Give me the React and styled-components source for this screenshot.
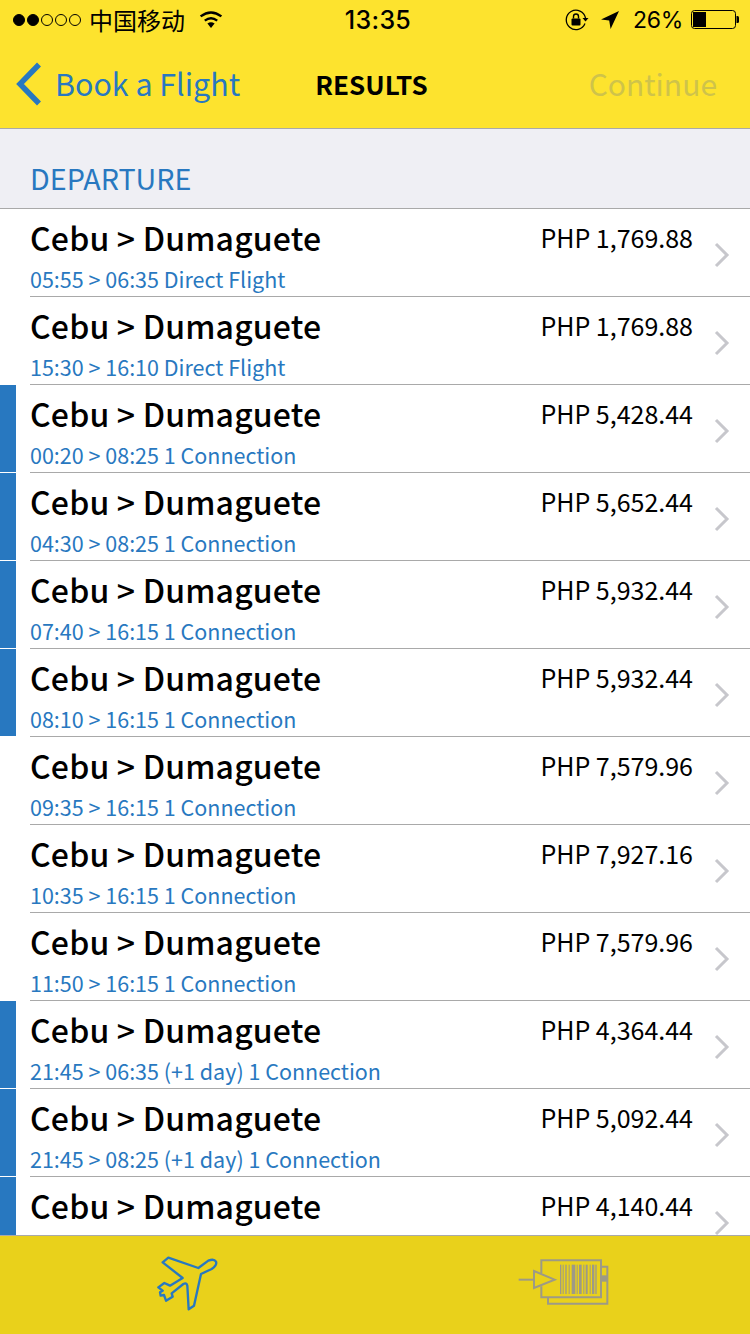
import React from "react";
import styled, { createGlobalStyle } from "styled-components";

const Global = createGlobalStyle`
  html, body { margin: 0; padding: 0; background: #fff; }
  body { font-family: "Noto Sans CJK JP", "Noto Sans", sans-serif; }
  #root { width: 750px; height: 1334px; overflow: hidden; }
`;

const Page = styled.div`
  width: 750px;
  height: 1334px;
  display: flex;
  flex-direction: column;
  overflow: hidden;
  background: #fff;
`;

const TopBar = styled.header`
  flex: none;
  height: 128px;
  background: #fde32e;
  border-bottom: 1px solid #a9a9a9;
  display: flex;
  flex-direction: column;
`;

const StatusBar = styled.div`
  height: 40px;
  display: grid;
  grid-template-columns: 1fr auto 1fr;
  align-items: center;
  padding: 0 11px 0 13px;
  color: #000;
  font-family: "Liberation Sans", sans-serif;
`;

const StatusLeft = styled.div`
  display: flex;
  align-items: center;
`;

const StatusRight = styled.div`
  display: flex;
  align-items: center;
  justify-content: flex-end;
`;

const Dots = styled.div`
  display: flex;
  gap: 2px;
`;

const Dot = styled.span`
  box-sizing: border-box;
  width: 12px;
  height: 12px;
  border-radius: 50%;
  border: 1px solid #000;
  background: ${p => (p.$on ? "#000" : "transparent")};
`;

const Carrier = styled.span`
  font: 400 24px/1 "Noto Sans CJK SC", sans-serif;
  margin-left: 8px;
`;

const Clock = styled.span`
  font: 500 25px/1 Inter, sans-serif;
  letter-spacing: 0.3px;
  margin-left: 4px;
`;

const Percent = styled.span`
  font: 400 23px/1 Inter, sans-serif;
  margin: 0 8px 0 0;
  letter-spacing: -0.3px;
`;

const NavBar = styled.nav`
  flex: 1;
  display: grid;
  grid-template-columns: 1fr auto 1fr;
  align-items: center;
  padding: 0 33px 0 16px;
`;

const Back = styled.div`
  display: flex;
  align-items: center;
  gap: 13px;
  color: #2878c0;
  font-size: 30.4px;
  line-height: 1;
`;

const BackLabel = styled.span`
  position: relative;
  top: -1px;
`;

const Title = styled.div`
  color: #000;
  font-size: 26px;
  font-weight: 700;
  line-height: 1;
  margin-left: 10px;
`;

const Continue = styled.div`
  justify-self: end;
  color: #cfc34a;
  font-size: 30px;
  line-height: 1;
  margin-top: -2px;
`;

const SectionHead = styled.div`
  flex: none;
  height: 80px;
  box-sizing: border-box;
  background: #efeff4;
  border-bottom: 1px solid #a9a9a9;
  padding: 31px 30px 0;
  color: #2878c0;
  font-size: 28.7px;
  line-height: 36px;
`;

const List = styled.div`
  flex: 1;
  min-height: 0;
  overflow: hidden;
`;

const Row = styled.div`
  position: relative;
  box-sizing: border-box;
  height: 88px;
  padding-left: 30px;
  background: #fff;
`;

const Marker = styled.span`
  position: absolute;
  left: 0;
  top: 0;
  bottom: 1px;
  width: 16px;
  background: #2878c0;
`;

const RowBody = styled.div`
  height: 100%;
  box-sizing: border-box;
  border-bottom: 1px solid #a9a9a9;
  display: grid;
  grid-template-columns: 1fr auto 57px;
  grid-template-rows: 55px 1fr;
  align-items: start;
`;

const Route = styled.div`
  grid-column: 1;
  grid-row: 1;
  color: #000;
  font-size: 32px;
  font-weight: 500;
  letter-spacing: 0.18px;
  line-height: 56px;
`;

const Price = styled.div`
  grid-column: 2;
  grid-row: 1;
  color: #000;
  font-size: 25px;
  line-height: 56px;
`;

const Sub = styled.div`
  grid-column: 1 / 3;
  grid-row: 2;
  color: #2878c0;
  font-size: 21.5px;
  line-height: 30px;
`;

const Chevron = styled.svg`
  grid-column: 3;
  grid-row: 1 / 3;
  justify-self: center;
  align-self: center;
  margin-top: 4px;
  margin-left: 1px;
`;

const TabBar = styled.footer`
  flex: none;
  height: 98px;
  background: #e9d11b;
  border-top: 1px solid #a9a9a9;
  display: grid;
  grid-template-columns: 1fr 1fr;
  align-items: center;
  justify-items: center;
`;

const flights = [
  ["05:55 > 06:35 Direct Flight", "1,769.88", false],
  ["15:30 > 16:10 Direct Flight", "1,769.88", false],
  ["00:20 > 08:25 1 Connection", "5,428.44", true],
  ["04:30 > 08:25 1 Connection", "5,652.44", true],
  ["07:40 > 16:15 1 Connection", "5,932.44", true],
  ["08:10 > 16:15 1 Connection", "5,932.44", true],
  ["09:35 > 16:15 1 Connection", "7,579.96", false],
  ["10:35 > 16:15 1 Connection", "7,927.16", false],
  ["11:50 > 16:15 1 Connection", "7,579.96", false],
  ["21:45 > 06:35 (+1 day) 1 Connection", "4,364.44", true],
  ["21:45 > 08:25 (+1 day) 1 Connection", "5,092.44", true],
  ["", "4,140.44", true],
];

const Wifi = () => (
  <svg width="24" height="18" viewBox="0 0 24 18" style={{ marginLeft: 14 }}>
    <path d="M12 17 L8.4 12.6 Q12 9.8 15.6 12.6 Z" fill="#000" />
    <path d="M5.8 9.6 Q12 4.8 18.2 9.6" fill="none" stroke="#000" strokeWidth="2.4" />
    <path d="M1.6 5.4 Q12 -2.6 22.4 5.4" fill="none" stroke="#000" strokeWidth="2.4" />
  </svg>
);

const RotationLock = () => (
  <svg width="24" height="22" viewBox="0 0 24 22" style={{ marginRight: 11 }}>
    <path d="M20.5 9 A9.7 9.7 0 1 0 20 14.5" fill="none" stroke="#000" strokeWidth="1.3" />
    <path d="M17.5 9 L23.5 9 L20.5 12.5 Z" fill="#000" />
    <rect x="6.5" y="9.5" width="9" height="7" rx="1" fill="#000" />
    <path d="M8.5 9.5 V7.5 A2.5 2.5 0 0 1 13.5 7.5 V9.5" fill="none" stroke="#000" strokeWidth="1.4" />
  </svg>
);

const Location = () => (
  <svg width="20" height="20" viewBox="0 0 20 20" style={{ marginRight: 13 }}>
    <path d="M19 1 L10.6 19 L9.2 10.6 L1 9.4 Z" fill="#000" />
  </svg>
);

const Battery = () => (
  <svg width="48" height="20" viewBox="0 0 48 20">
    <rect x="0.5" y="0.5" width="44" height="18" rx="3" fill="none" stroke="#000" />
    <rect x="2" y="2" width="13" height="15" fill="#000" />
    <path d="M45.5 6 h1 a1.5 1.5 0 0 1 1.5 1.5 v4 a1.5 1.5 0 0 1 -1.5 1.5 h-1 Z" fill="#000" />
  </svg>
);

const BackArrow = () => (
  <svg width="26" height="44" viewBox="0 0 26 44">
    <path d="M23 2.5 L4 22 L23 41.5" fill="none" stroke="#2878c0" strokeWidth="5.5" />
  </svg>
);

const Plane = () => (
  <svg width="62" height="57" viewBox="81 58 186 171" style={{ marginTop: -4 }}>
    <path
      d="M115 66 L205 97 L235 75 Q252 68 258 78 Q262 88 245 100 L213 115 L192 210 L176 221 L172 150 Q170 140 160 145 L125 173 L128 183 L108 195 L102 178 L92 180 L90 170 L98 165 L85 155 L103 142 L120 150 L158 127 L98 80 Z"
      fill="none"
      stroke="#2878c0"
      strokeWidth="7"
      strokeLinejoin="round"
    />
  </svg>
);

const bars = [
  [178, 4], [186, 3], [194, 4], [204, 3], [213, 11], [228, 3], [235, 8], [248, 3], [255, 6], [267, 3], [274, 7], [284, 4],
];

const Baggage = () => (
  <svg width="92" height="48" viewBox="52 60 276 144" fill="none" stroke="#9d9a86" strokeWidth="6" style={{ marginLeft: 2, marginTop: -6 }}>
    <path d="M122 105 V67 H301 V178 H122 V145" />
    <path d="M301 86 H320 V197 H142 V178" />
    <path d="M54 125 H100" />
    <path d="M100 99 L162 125 L100 150 Z" />
    <rect x="301" y="112" width="20" height="19" fill="#9d9a86" stroke="none" />
    {bars.map(([x, w]) => (
      <rect key={x} x={x} y="80" width={w} height="88" fill="#9d9a86" stroke="none" />
    ))}
  </svg>
);

export default function App() {
  return (
    <Page>
      <Global />
      <TopBar>
        <StatusBar>
          <StatusLeft>
            <Dots>
              <Dot $on /><Dot $on /><Dot /><Dot /><Dot />
            </Dots>
            <Carrier>中国移动</Carrier>
            <Wifi />
          </StatusLeft>
          <Clock>13:35</Clock>
          <StatusRight>
            <RotationLock />
            <Location />
            <Percent>26%</Percent>
            <Battery />
          </StatusRight>
        </StatusBar>
        <NavBar>
          <Back>
            <BackArrow />
            <BackLabel>Book a Flight</BackLabel>
          </Back>
          <Title>RESULTS</Title>
          <Continue>Continue</Continue>
        </NavBar>
      </TopBar>
      <SectionHead>DEPARTURE</SectionHead>
      <List>
        {flights.map(([sub, price, marked], i) => (
          <Row key={i}>
            {marked && <Marker />}
            <RowBody>
              <Route>Cebu &gt; Dumaguete</Route>
              <Price>PHP {price}</Price>
              <Sub>{sub}</Sub>
              <Chevron width="16" height="26" viewBox="0 0 16 26">
                <path d="M2 2 L13 13 L2 24" fill="none" stroke="#c7c7cc" strokeWidth="3" />
              </Chevron>
            </RowBody>
          </Row>
        ))}
      </List>
      <TabBar>
        <Plane />
        <Baggage />
      </TabBar>
    </Page>
  );
}
